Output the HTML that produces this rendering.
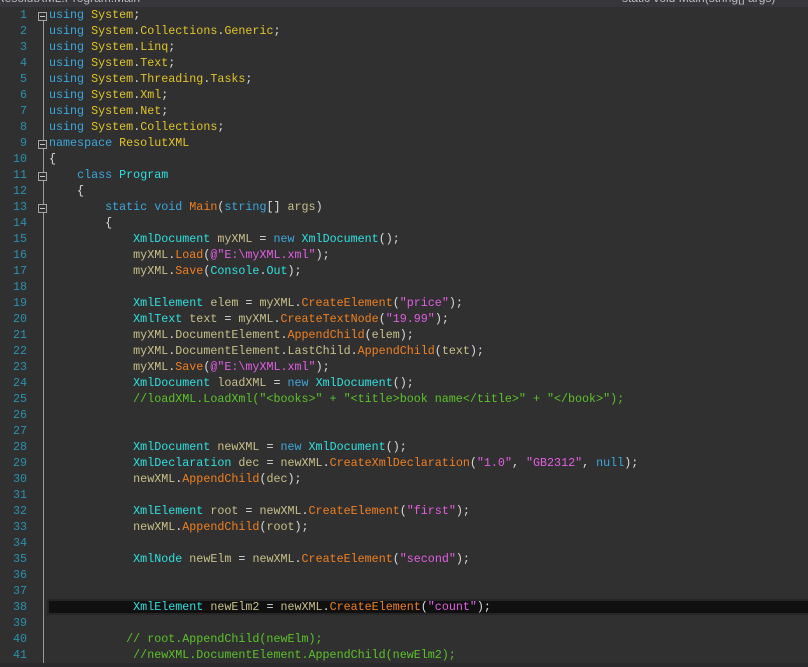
<!DOCTYPE html>
<html><head><meta charset="utf-8"><style>
html,body{margin:0;padding:0;background:#303030;width:808px;height:667px;overflow:hidden;position:relative}
.top{position:absolute;left:0;top:0;width:808px;height:7px;background:#36363b;overflow:hidden}
.top span{position:absolute;top:-9px;font:12px "Liberation Sans",sans-serif;color:#bdbdbd;white-space:pre}
.bot{position:absolute;left:0;top:663px;width:808px;height:4px;background:#2a2a2c}
.ln{position:absolute;left:0;width:27px;text-align:right;font:11.7px/16px "Liberation Mono",monospace;color:#2b91af}
.code{position:absolute;left:49px;font:11.7px/16px "Liberation Mono",monospace;color:#dcdcdc;white-space:pre}
.guide{position:absolute;left:43px;width:1px;background:#9a9a9a}
.fold{position:absolute;left:38px;width:9px;height:9px;border:1px solid #a5a5a5;background:#303030;box-sizing:border-box}
.fold:after{content:"";position:absolute;left:1px;top:3px;width:5px;height:1px;background:#c8c8c8}
.hl{position:absolute;left:47px;top:599px;width:761px;height:16px;background:#262626}
.hl i{position:absolute;left:2px;top:2px;right:0;bottom:2px;background:#101010}
.k{color:#3ba8dc}.t{color:#2fe0e0}.n{color:#e2c428}.i{color:#c8c08a}.m{color:#f08020}.s{color:#e35fe3}.c{color:#5cc22a}
</style></head><body>
<div class="top"><span style="left:-4px">ResolutXML.Program.Main</span><span style="left:622px">static void Main(string[] args)</span></div>
<div class="guide" style="top:16px;height:647px"></div>
<div class="hl"><i></i></div>
<div id="g"></div>
<script>
var L=[
'<span class="k">using</span> <span class="n">System</span>;',
'<span class="k">using</span> <span class="n">System</span>.<span class="n">Collections</span>.<span class="n">Generic</span>;',
'<span class="k">using</span> <span class="n">System</span>.<span class="n">Linq</span>;',
'<span class="k">using</span> <span class="n">System</span>.<span class="n">Text</span>;',
'<span class="k">using</span> <span class="n">System</span>.<span class="n">Threading</span>.<span class="n">Tasks</span>;',
'<span class="k">using</span> <span class="n">System</span>.<span class="n">Xml</span>;',
'<span class="k">using</span> <span class="n">System</span>.<span class="n">Net</span>;',
'<span class="k">using</span> <span class="n">System</span>.<span class="n">Collections</span>;',
'<span class="k">namespace</span> <span class="n">ResolutXML</span>',
'{',
'    <span class="k">class</span> <span class="t">Program</span>',
'    {',
'        <span class="k">static</span> <span class="k">void</span> <span class="m">Main</span>(<span class="k">string</span>[] <span class="i">args</span>)',
'        {',
'            <span class="t">XmlDocument</span> <span class="i">myXML</span> = <span class="k">new</span> <span class="t">XmlDocument</span>();',
'            <span class="i">myXML</span>.<span class="m">Load</span>(<span class="s">@"E:\\myXML.xml"</span>);',
'            <span class="i">myXML</span>.<span class="m">Save</span>(<span class="t">Console</span>.<span class="t">Out</span>);',
'',
'            <span class="t">XmlElement</span> <span class="i">elem</span> = <span class="i">myXML</span>.<span class="m">CreateElement</span>(<span class="s">"price"</span>);',
'            <span class="t">XmlText</span> <span class="i">text</span> = <span class="i">myXML</span>.<span class="m">CreateTextNode</span>(<span class="s">"19.99"</span>);',
'            <span class="i">myXML</span>.<span class="i">DocumentElement</span>.<span class="m">AppendChild</span>(<span class="i">elem</span>);',
'            <span class="i">myXML</span>.<span class="i">DocumentElement</span>.<span class="i">LastChild</span>.<span class="m">AppendChild</span>(<span class="i">text</span>);',
'            <span class="i">myXML</span>.<span class="m">Save</span>(<span class="s">@"E:\\myXML.xml"</span>);',
'            <span class="t">XmlDocument</span> <span class="i">loadXML</span> = <span class="k">new</span> <span class="t">XmlDocument</span>();',
'            <span class="c">//loadXML.LoadXml("&lt;books&gt;" + "&lt;title&gt;book name&lt;/title&gt;" + "&lt;/book&gt;");</span>',
'','',
'            <span class="t">XmlDocument</span> <span class="i">newXML</span> = <span class="k">new</span> <span class="t">XmlDocument</span>();',
'            <span class="t">XmlDeclaration</span> <span class="i">dec</span> = <span class="i">newXML</span>.<span class="m">CreateXmlDeclaration</span>(<span class="s">"1.0"</span>, <span class="s">"GB2312"</span>, <span class="k">null</span>);',
'            <span class="i">newXML</span>.<span class="m">AppendChild</span>(<span class="i">dec</span>);',
'',
'            <span class="t">XmlElement</span> <span class="i">root</span> = <span class="i">newXML</span>.<span class="m">CreateElement</span>(<span class="s">"first"</span>);',
'            <span class="i">newXML</span>.<span class="m">AppendChild</span>(<span class="i">root</span>);',
'',
'            <span class="t">XmlNode</span> <span class="i">newElm</span> = <span class="i">newXML</span>.<span class="m">CreateElement</span>(<span class="s">"second"</span>);',
'','',
'            <span class="t">XmlElement</span> <span class="i">newElm2</span> = <span class="i">newXML</span>.<span class="m">CreateElement</span>(<span class="s">"count"</span>);',
'',
'           <span class="c">// root.AppendChild(newElm);</span>',
'            <span class="c">//newXML.DocumentElement.AppendChild(newElm2);</span>'
];
var h='';
for(var n=0;n<L.length;n++){var y=7+n*16;
h+='<div class="ln" style="top:'+y+'px">'+(n+1)+'</div><div class="code" style="top:'+y+'px">'+L[n]+'</div>';}
[1,9,11,13].forEach(function(n){h+='<div class="fold" style="top:'+(7+(n-1)*16+5)+'px"></div>';});
document.getElementById('g').innerHTML=h;
</script>
<div class="bot"></div>
</body></html>
